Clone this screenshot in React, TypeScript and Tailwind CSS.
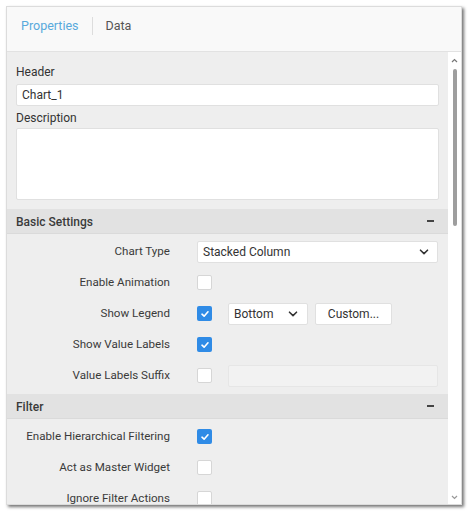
import React from "react";

const Check = ({ checked }: { checked?: boolean }) =>
  checked ? (
    <div className="w-[15px] h-[15px] rounded-[2px] bg-[#2f8be6] flex items-center justify-center">
      <svg width="10" height="10" viewBox="0 0 10 10">
        <path d="M2 5.2 L4.1 7.2 L8 2.8" fill="none" stroke="#fff" strokeWidth="1.6" strokeLinecap="round" strokeLinejoin="round" />
      </svg>
    </div>
  ) : (
    <div className="w-[15px] h-[15px] rounded-[2px] bg-white border border-[#d6d6d6]" />
  );

const Chevron = () => (
  <svg width="10" height="6" viewBox="0 0 10 6">
    <path d="M1.5 1.2 L5 4.6 L8.5 1.2" fill="none" stroke="#333" strokeWidth="1.6" strokeLinecap="round" strokeLinejoin="round" />
  </svg>
);

const Row = ({ label, children }: { label: string; children?: React.ReactNode }) => (
  <div className="flex items-center h-[31px]">
    <div className="w-[163px] text-right text-[11.6px] text-[#3a3a3a]">{label}</div>
    <div className="ml-[27px] flex items-center flex-1 pr-[10px]">{children}</div>
  </div>
);

const Band = ({ title }: { title: string }) => (
  <div className="h-[25px] bg-[#e2e2e2] flex items-center justify-between pl-[9px] pr-[14px] border-b border-[#dadada]">
    <span className="text-[12px] font-medium text-[#3a3a3a] translate-y-[1px]">{title}</span>
    <span className="w-[7px] h-[2px] bg-[#444]" />
  </div>
);

export default function App() {
  return (
    <div className="w-[474px] h-[516px] bg-white" style={{ fontFamily: "Roboto, 'Liberation Sans', sans-serif" }}>
      <div className="absolute left-[6px] top-[6px] w-[456px] h-[499px] border border-[#dcdcdc] bg-[#f9f9f9] shadow-[2px_2px_3px_rgba(0,0,0,0.55)] flex flex-col overflow-hidden">
        <div className="h-[45px] shrink-0 flex items-start pt-[10px] bg-[#f9f9f9] border-b border-[#e2e2e2] pl-[14px]">
          <span className="text-[12.5px] text-[#58a9dc] leading-[18px]">Properties</span>
          <span className="mx-[13px] w-px h-[18px] bg-[#dddddd]" />
          <span className="text-[12.5px] text-[#555] leading-[18px]">Data</span>
        </div>
        <div className="flex flex-1 min-h-0">
          <div className="flex-1 bg-[#eeeeee] overflow-hidden">
            <div className="px-[9px] pt-[12px] pb-[9px]">
              <div className="text-[12px] text-[#333] leading-[16px]">Header</div>
              <div className="mt-[4px] h-[22px] bg-white border border-[#e0e0e0] rounded-[2px] flex items-center px-[5px] text-[12px] text-[#333]">Chart_1</div>
              <div className="mt-[4px] text-[12px] text-[#333] leading-[16px]">Description</div>
              <div className="mt-[2px] h-[72px] bg-white border border-[#e0e0e0] rounded-[2px]" />
            </div>
            <Band title="Basic Settings" />
            <div className="pt-[2px] pb-[3px]">
              <Row label="Chart Type">
                <div className="w-full h-[22px] bg-white border border-[#e0e0e0] rounded-[2px] flex items-center justify-between pl-[5px] pr-[8px] text-[12px] text-[#333]">
                  <span>Stacked Column</span>
                  <Chevron />
                </div>
              </Row>
              <Row label="Enable Animation">
                <Check />
              </Row>
              <Row label="Show Legend">
                <Check checked />
                <div className="ml-[16px] w-[80px] h-[22px] bg-white border border-[#e0e0e0] rounded-[2px] flex items-center justify-between pl-[5px] pr-[9px] text-[12px] text-[#333]">
                  <span>Bottom</span>
                  <Chevron />
                </div>
                <div className="ml-[7px] w-[77px] h-[22px] bg-white border border-[#e0e0e0] rounded-[2px] flex items-center justify-center text-[12px] text-[#333]">Custom...</div>
              </Row>
              <Row label="Show Value Labels">
                <Check checked />
              </Row>
              <Row label="Value Labels Suffix">
                <Check />
                <div className="ml-[16px] flex-1 h-[22px] bg-[#f2f2f2] border border-[#e6e6e6] rounded-[2px]" />
              </Row>
            </div>
            <Band title="Filter" />
            <div className="pt-[2px]">
              <Row label="Enable Hierarchical Filtering">
                <Check checked />
              </Row>
              <Row label="Act as Master Widget">
                <Check />
              </Row>
              <Row label="Ignore Filter Actions">
                <Check />
              </Row>
            </div>
          </div>
          <div className="w-[13px] bg-white flex flex-col items-center pt-[6px] pb-[4px]">
            <svg width="7" height="5" viewBox="0 0 7 5">
              <path d="M1 4 L3.5 1.5 L6 4" fill="none" stroke="#777" strokeWidth="1.2" />
            </svg>
            <div className="mt-[6px] w-[4px] h-[157px] rounded-full bg-[#9e9e9e]" />
            <div className="flex-1" />
            <svg width="7" height="5" viewBox="0 0 7 5">
              <path d="M1 1 L3.5 3.5 L6 1" fill="none" stroke="#999" strokeWidth="1.2" />
            </svg>
          </div>
        </div>
      </div>
    </div>
  );
}
